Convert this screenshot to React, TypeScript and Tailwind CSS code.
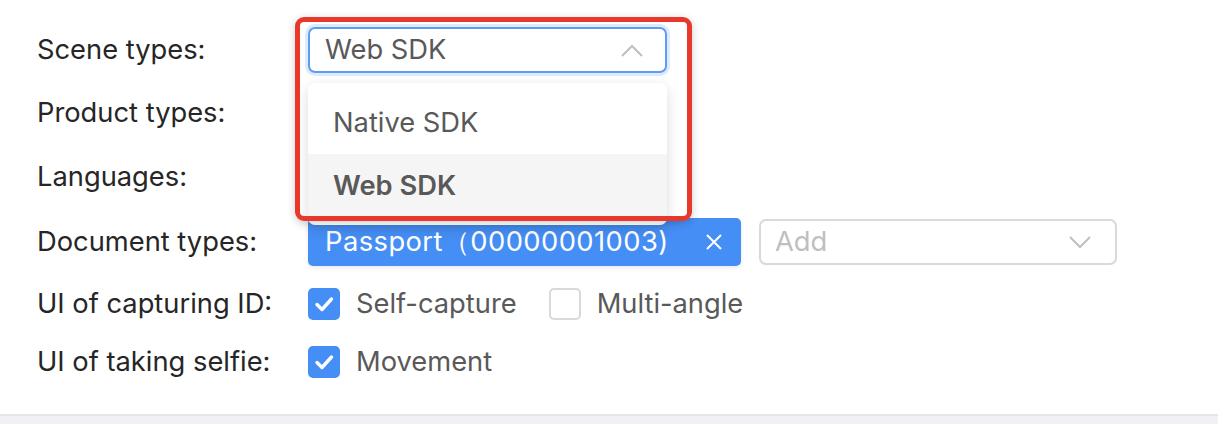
import React from "react";

const font = { fontFamily: "Inter, 'Noto Sans', sans-serif" };

function Check({ on }: { on: boolean }) {
  if (!on)
    return <span className="block h-8 w-8 flex-none rounded-[5px] border-2 border-[#d9d9d9] bg-white" />;
  return (
    <span className="flex h-8 w-8 flex-none items-center justify-center rounded-[5px] bg-[#458ef5]">
      <svg width="20" height="16" viewBox="0 0 20 16" fill="none">
        <path d="M3 8.5l5 5L17.5 3" stroke="white" strokeWidth="3.4" strokeLinecap="round" strokeLinejoin="round" />
      </svg>
    </span>
  );
}

function Row({ label, className, children }: { label: string; className: string; children?: React.ReactNode }) {
  return (
    <div className={`flex items-center ${className}`}>
      <div className="w-[271px] flex-none text-[#262626]">{label}</div>
      {children}
    </div>
  );
}

export default function App() {
  return (
    <div className="relative h-[424px] w-[1218px] overflow-hidden bg-white pl-[37px] pt-[27px] text-[27.3px] leading-none" style={font}>
      <Row label="Scene types:" className="h-[46px]">
        <div className="relative">
          <div className="flex h-[46px] w-[359px] items-center justify-between rounded-[7px] border-2 border-[#5d9cf4] pl-[15px] pr-[22px] text-[#595959] shadow-[0_0_0_3px_rgba(93,156,244,0.2)]">
            <span>Web SDK</span>
            <svg width="22" height="13" viewBox="0 0 22 13" fill="none">
              <path d="M1 12L11 2l10 10" stroke="#bfbfbf" strokeWidth="2" />
            </svg>
          </div>
          <div className="absolute left-0 top-[56px] z-10 w-[359px] rounded-[7px] bg-white py-2 text-[#595959] shadow-[0_4px_14px_rgba(0,0,0,0.14)]">
            <div className="flex h-[63px] items-center pl-[25px]">Native SDK</div>
            <div className="flex h-[63px] items-center bg-[#f5f5f5] pl-[25px] font-semibold">Web SDK</div>
          </div>
        </div>
      </Row>
      <Row label="Product types:" className="mt-[17px] h-[46px]" />
      <Row label="Languages:" className="mt-[18px] h-[46px]" />
      <Row label="Document types:" className="mt-[18px] h-[48px]">
        <div className="flex h-[48px] w-[433px] items-center justify-between rounded-[5px] bg-[#458ef5] pl-[17px] pr-[18px] text-white shadow-[0_2px_4px_rgba(0,0,0,0.08)]">
          <span className="tracking-[0.45px]">Passport（00000001003)</span>
          <svg width="18" height="18" viewBox="0 0 18 18" fill="none">
            <path d="M2 2l14 14M16 2L2 16" stroke="white" strokeWidth="2" />
          </svg>
        </div>
        <div className="ml-[18px] flex h-[46px] w-[358px] items-center justify-between rounded-[7px] border-2 border-[#d9d9d9] pl-[14px] pr-[24px] text-[#bfbfbf]">
          <span>Add</span>
          <svg width="22" height="13" viewBox="0 0 22 13" fill="none">
            <path d="M1 1l10 10L21 1" stroke="#bfbfbf" strokeWidth="2" />
          </svg>
        </div>
      </Row>
      <Row label="UI of capturing ID:" className="mt-[15px] h-[46px]">
        <Check on />
        <span className="ml-4 text-[#595959]">Self-capture</span>
        <span className="ml-8 flex"><Check on={false} /></span>
        <span className="ml-4 text-[#595959]">Multi-angle</span>
      </Row>
      <Row label="UI of taking selfie:" className="mt-[12px] h-[46px]">
        <Check on />
        <span className="ml-4 text-[#595959]">Movement</span>
      </Row>
      <div className="absolute bottom-0 left-0 h-[10px] w-full border-t-2 border-[#e6e6e6] bg-[#f0f1f5]" />
      <div className="pointer-events-none absolute left-[295px] top-[17px] z-20 h-[204px] w-[397px] rounded-[9px] border-[5px] border-[#e8382b] shadow-[0_2px_8px_rgba(0,0,0,0.2)]" />
    </div>
  );
}
